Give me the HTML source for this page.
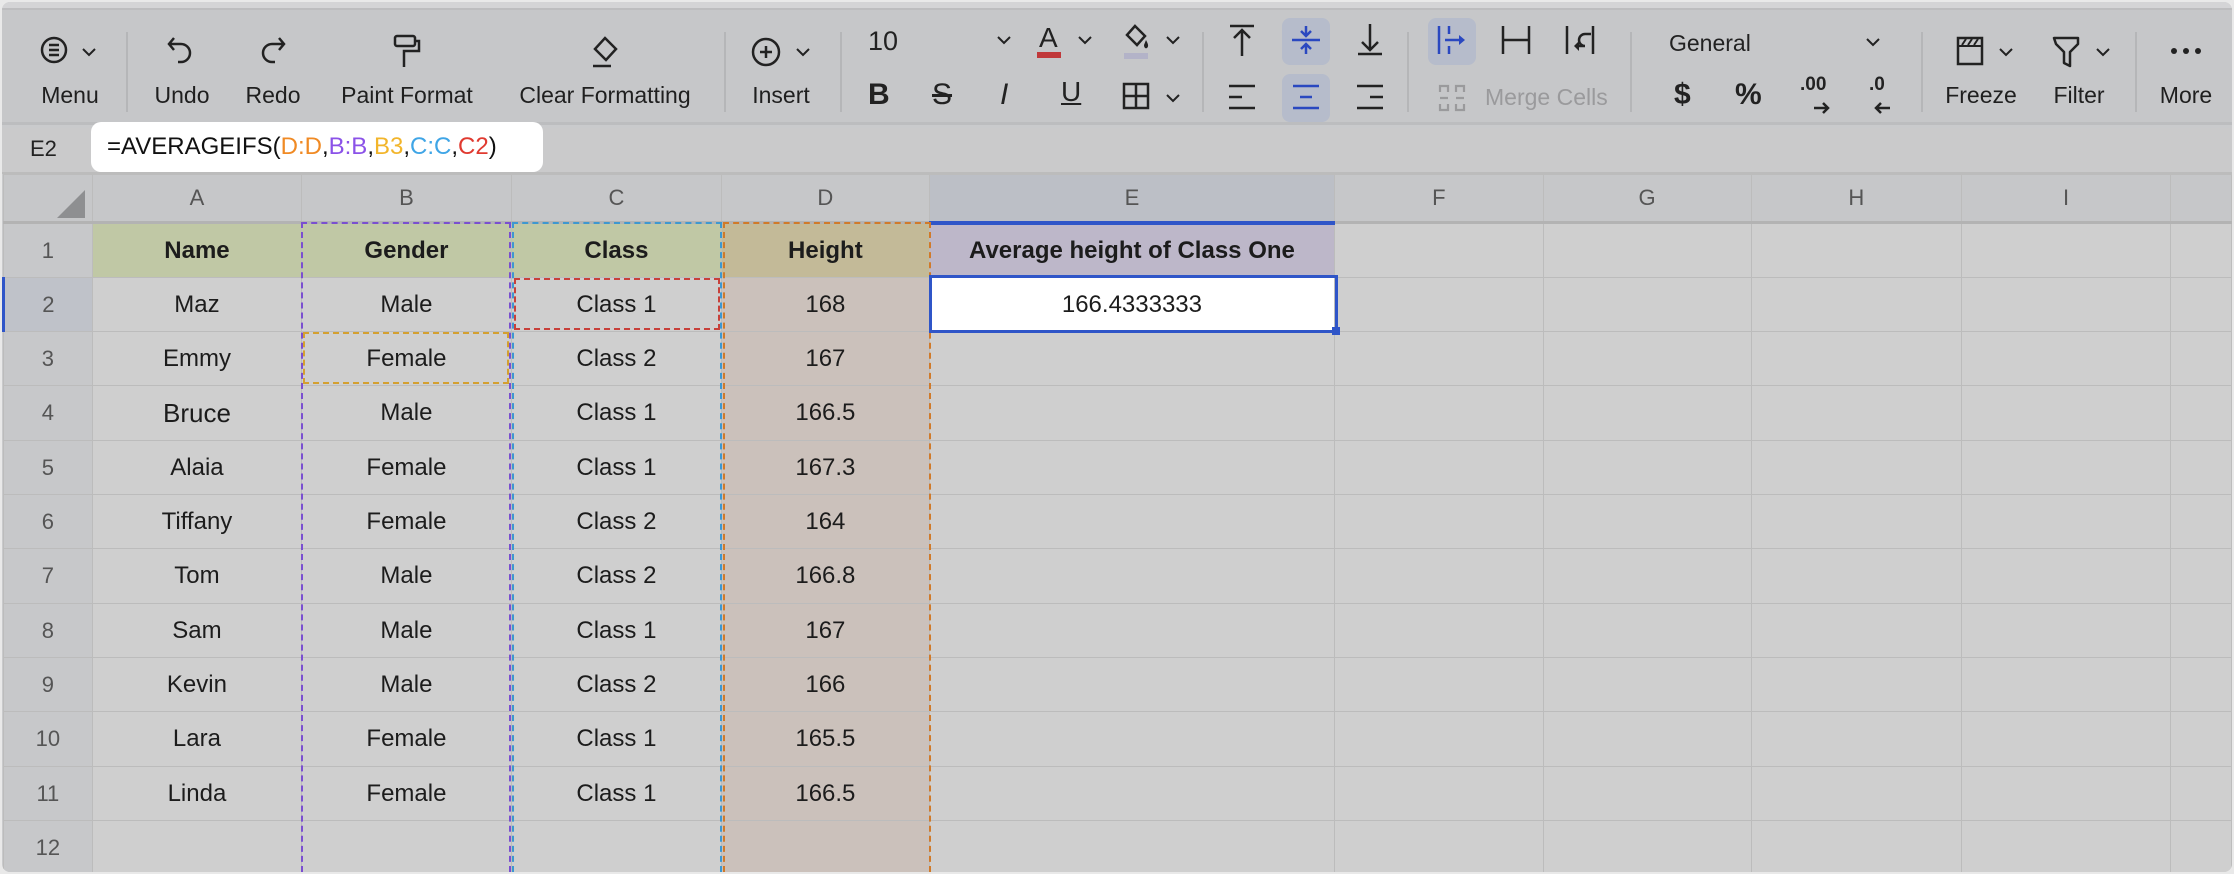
<!DOCTYPE html>
<html><head><meta charset="utf-8"><style>
*{box-sizing:border-box;margin:0;padding:0}
body{width:2234px;height:874px;background:#e9e9e9;font-family:"Liberation Sans",sans-serif;position:relative;overflow:hidden}
.frame{position:absolute;left:2px;top:2px;width:2230px;height:870px;border-radius:8px;background:#c9cacc;overflow:hidden}
.topstrip{position:absolute;left:0;top:0;width:100%;height:8px;background:#d4d4d6;border-bottom:2px solid #bdbdbf}
.tb{position:absolute;left:0;top:8px;width:100%;height:115px;background:#c6c7c9;border-bottom:3px solid #bcbdbf}
.a{position:absolute}
.lbl{position:absolute;font-size:23px;color:#1f1f1f;transform:translateX(-50%);white-space:nowrap;top:72px}
.sep{position:absolute;top:22px;width:2px;height:80px;background:#b5b6b8}
.hl{position:absolute;background:#b6bccb;border-radius:8px}
svg{position:absolute;overflow:visible}
.fb{position:absolute;left:0;top:126px;width:100%;height:46px;background:#cacacb;border-bottom:2px solid #bcbcbc}
.fbox{position:absolute;left:89px;top:-6px;width:452px;height:50px;background:#fff;border-radius:10px}
table{position:absolute;left:0;top:172px;border-collapse:collapse;table-layout:fixed}
td{border:1px solid #bcbcbc;text-align:center;font-size:24px;color:#1c1c1c;background:#cfcfcf;padding:0;overflow:hidden;white-space:nowrap}
tr.h td{background:#c6c7c9;color:#555;font-size:22px;height:48px;border-bottom:3px solid #b3b3b3}
td.rh{background:#c7c8ca;color:#555;font-size:22px}
.g{background:#c0c8a5!important;font-weight:bold}
.dh{background:#c3ba98!important;font-weight:bold}
.d{background:#cbc1bb!important}
.e1{background:#bdb7c9!important;font-weight:bold}
.dash{position:absolute}
</style></head><body>
<div class="frame">
<div class="topstrip"></div>
<div class="tb">
 <!-- Menu -->
 <svg style="left:38px;top:24px" width="32" height="32" viewBox="0 0 32 32"><circle cx="14" cy="16" r="12" fill="none" stroke="#222" stroke-width="2.5"/><path d="M9 11h10M9 16h10M9 21h10" stroke="#222" stroke-width="2.5"/></svg>
 <svg style="left:80px;top:38px" width="14" height="8"><path d="M1 1l6 6 6-6" stroke="#222" stroke-width="2" fill="none"/></svg>
 <div class="lbl" style="left:68px">Menu</div>
 <div class="sep" style="left:124px"></div>
 <svg style="left:166px;top:26px" width="28" height="32"><path d="M6 2L1 8l5 6M1 8h12a9 9 0 010 18H10" stroke="#222" stroke-width="2.5" fill="none"/></svg>
 <div class="lbl" style="left:180px">Undo</div>
 <svg style="left:257px;top:26px" width="28" height="32"><path d="M20 2l5 6-5 6M25 8H13a9 9 0 000 18h3" stroke="#222" stroke-width="2.5" fill="none"/></svg>
 <div class="lbl" style="left:271px">Redo</div>
 <svg style="left:390px;top:24px" width="30" height="36"><rect x="3" y="2" width="20" height="10" rx="2" fill="none" stroke="#222" stroke-width="2.5"/><path d="M23 7h4v10H12v16" stroke="#222" stroke-width="2.5" fill="none"/></svg>
 <div class="lbl" style="left:405px">Paint Format</div>
 <svg style="left:588px;top:26px" width="30" height="32"><path d="M15 2l11 11-10 11-11-11zM5 13l11 11M3 30h18" stroke="#222" stroke-width="2.5" fill="none"/></svg>
 <div class="lbl" style="left:603px">Clear Formatting</div>
 <div class="sep" style="left:722px"></div>
 <svg style="left:748px;top:26px" width="32" height="32"><circle cx="16" cy="16" r="13" fill="none" stroke="#222" stroke-width="2.5"/><path d="M16 10v12M10 16h12" stroke="#222" stroke-width="2.5"/></svg>
 <svg style="left:794px;top:38px" width="14" height="8"><path d="M1 1l6 6 6-6" stroke="#222" stroke-width="2" fill="none"/></svg>
 <div class="lbl" style="left:779px">Insert</div>
 <div class="sep" style="left:838px"></div>
 <div class="a" style="left:866px;top:16px;font-size:27px;color:#222">10</div>
 <svg style="left:995px;top:26px" width="14" height="8"><path d="M1 1l6 6 6-6" stroke="#222" stroke-width="2" fill="none"/></svg>
 <div class="a" style="left:1037px;top:12px;font-size:28px;color:#222">A</div>
 <div class="a" style="left:1035px;top:42px;width:24px;height:6px;background:#c0383a"></div>
 <svg style="left:1076px;top:26px" width="14" height="8"><path d="M1 1l6 6 6-6" stroke="#222" stroke-width="2" fill="none"/></svg>
 <svg style="left:1120px;top:14px" width="30" height="36"><path d="M13 2l10 10-8 9-10-10z" fill="none" stroke="#222" stroke-width="2.5"/><path d="M24 16c2 4 3 6 1 8-2 1-3-1-3-3z" fill="#222"/><rect x="2" y="29" width="24" height="6" fill="#b3b3c8"/></svg>
 <svg style="left:1164px;top:26px" width="14" height="8"><path d="M1 1l6 6 6-6" stroke="#222" stroke-width="2" fill="none"/></svg>
 <div class="a" style="left:866px;top:68px;font-size:30px;font-weight:bold;color:#222">B</div>
 <div class="a" style="left:930px;top:68px;font-size:30px;color:#222;text-decoration:line-through">S</div>
 <div class="a" style="left:998px;top:68px;font-size:30px;font-style:italic;color:#222">I</div>
 <div class="a" style="left:1059px;top:66px;font-size:28px;color:#222;text-decoration:underline">U</div>
 <svg style="left:1120px;top:72px" width="28" height="28"><rect x="2" y="2" width="24" height="24" fill="none" stroke="#222" stroke-width="2.5"/><path d="M14 2v24M2 14h24" stroke="#222" stroke-width="2.5"/></svg>
 <svg style="left:1164px;top:84px" width="14" height="8"><path d="M1 1l6 6 6-6" stroke="#222" stroke-width="2" fill="none"/></svg>
 <div class="sep" style="left:1200px"></div>
 <div class="hl" style="left:1280px;top:8px;width:48px;height:47px"></div>
 <div class="hl" style="left:1280px;top:64px;width:48px;height:48px"></div>
 <div class="hl" style="left:1426px;top:8px;width:48px;height:47px"></div>
 <svg style="left:1227px;top:14px" width="26" height="32"><path d="M1 2h24M13 32V6M5 14l8-8 8 8" stroke="#222" stroke-width="2.5" fill="none"/></svg>
 <svg style="left:1290px;top:14px" width="28" height="32"><path d="M0 16h28M14 2v10M9 7l5 5 5-5M14 30V20M9 25l5-5 5 5" stroke="#2a48c0" stroke-width="2.5" fill="none"/></svg>
 <svg style="left:1355px;top:14px" width="26" height="32"><path d="M1 30h24M13 0v26M5 18l8 8 8-8" stroke="#222" stroke-width="2.5" fill="none"/></svg>
 <svg style="left:1227px;top:74px" width="26" height="26"><path d="M0 2h26M0 13h13M0 24h26" stroke="#222" stroke-width="2.5"/></svg>
 <svg style="left:1291px;top:74px" width="26" height="26"><path d="M0 2h26M7 13h12M0 24h26" stroke="#2a48c0" stroke-width="2.5"/></svg>
 <svg style="left:1355px;top:74px" width="26" height="26"><path d="M0 2h26M13 13h13M0 24h26" stroke="#222" stroke-width="2.5"/></svg>
 <div class="sep" style="left:1405px"></div>
 <svg style="left:1435px;top:14px" width="30" height="32"><path d="M2 2v28M12 2v8M12 22v8M8 16h16" stroke="#2a48c0" stroke-width="2.5" fill="none"/><path d="M22 11l6 5-6 5z" fill="#2a48c0"/></svg>
 <svg style="left:1499px;top:16px" width="30" height="28"><path d="M2 0v28M28 0v28M2 14h26" stroke="#222" stroke-width="2.5"/></svg>
 <svg style="left:1563px;top:16px" width="30" height="28"><path d="M2 0v28M28 0v28M26 8h-6a6 6 0 000 12h-8" stroke="#222" stroke-width="2.5" fill="none"/><path d="M14 15l-5 5 5 5z" fill="#222"/></svg>
 <svg style="left:1436px;top:72px" width="30" height="32"><path d="M2 10V4h8v6M18 10V4h8v6M2 22v6h8v-6M18 22v6h8v-6M2 16h8M18 16h8" stroke="#9a9a9c" stroke-width="2.2" fill="none"/></svg>
 <div class="a" style="left:1483px;top:74px;font-size:23px;color:#9a9a9c">Merge Cells</div>
 <div class="sep" style="left:1628px"></div>
 <div class="a" style="left:1667px;top:20px;font-size:23px;color:#222">General</div>
 <svg style="left:1864px;top:28px" width="14" height="8"><path d="M1 1l6 6 6-6" stroke="#222" stroke-width="2" fill="none"/></svg>
 <div class="a" style="left:1672px;top:68px;font-size:30px;font-weight:bold;color:#222">$</div>
 <div class="a" style="left:1733px;top:68px;font-size:30px;font-weight:bold;color:#222">%</div>
 <div class="a" style="left:1798px;top:64px;font-size:19px;font-weight:bold;color:#222">.00</div>
 <svg style="left:1812px;top:91px" width="18" height="14"><path d="M0 7h14M9 2l5 5-5 5" stroke="#222" stroke-width="2.5" fill="none"/></svg>
 <div class="a" style="left:1867px;top:64px;font-size:19px;font-weight:bold;color:#222">.0</div>
 <svg style="left:1870px;top:91px" width="18" height="14"><path d="M18 7H4M9 2L4 7l5 5" stroke="#222" stroke-width="2.5" fill="none"/></svg>
 <div class="sep" style="left:1919px"></div>
 <svg style="left:1954px;top:26px" width="28" height="30"><rect x="2" y="2" width="24" height="26" fill="none" stroke="#222" stroke-width="2.5"/><path d="M2 10h24M6 9l4-6M12 9l4-6M18 9l4-6" stroke="#222" stroke-width="2"/></svg>
 <svg style="left:1997px;top:38px" width="14" height="8"><path d="M1 1l6 6 6-6" stroke="#222" stroke-width="2" fill="none"/></svg>
 <div class="lbl" style="left:1979px">Freeze</div>
 <svg style="left:2050px;top:26px" width="28" height="32"><path d="M2 2h24v6l-8 8v14l-6-3V16L4 8z" fill="none" stroke="#222" stroke-width="2.5" stroke-linejoin="round"/></svg>
 <svg style="left:2094px;top:38px" width="14" height="8"><path d="M1 1l6 6 6-6" stroke="#222" stroke-width="2" fill="none"/></svg>
 <div class="lbl" style="left:2077px">Filter</div>
 <div class="sep" style="left:2133px"></div>
 <svg style="left:2168px;top:37px" width="32" height="8"><circle cx="4" cy="4" r="3" fill="#222"/><circle cx="16" cy="4" r="3" fill="#222"/><circle cx="28" cy="4" r="3" fill="#222"/></svg>
 <div class="lbl" style="left:2184px">More</div>
</div>
<div class="fb">
 <div class="a" style="left:28px;top:8px;font-size:22px;color:#222">E2</div>
 <div class="fbox"><div class="a" style="left:16px;top:11px;font-size:24px;color:#111;white-space:nowrap">=AVERAGEIFS(<span style="color:#f08a24">D:D</span>,<span style="color:#8b52e8">B:B</span>,<span style="color:#f2b52b">B3</span>,<span style="color:#3fa5e6">C:C</span>,<span style="color:#e03a30">C2</span>)</div></div>
</div>
<table>
<colgroup><col style="width:89px"><col style="width:210px"><col style="width:210px"><col style="width:211px"><col style="width:208px"><col style="width:406px"><col style="width:209px"><col style="width:209px"><col style="width:211px"><col style="width:210px"><col style="width:61px"></colgroup>
<tr class="h"><td></td><td>A</td><td>B</td><td>C</td><td>D</td><td style="background:#bcbfc6;border-bottom:4px solid #2f55c8">E</td><td>F</td><td>G</td><td>H</td><td>I</td><td></td></tr>
<tr style="height:55px"><td class="rh">1</td><td class="g">Name</td><td class="g">Gender</td><td class="g">Class</td><td class="dh">Height</td><td class="e1">Average height of Class One</td><td></td><td></td><td></td><td></td><td></td></tr>
<tr style="height:54px"><td class="rh" style="background:#bfc2c9;border-left:3px solid #2f55c8">2</td><td>Maz</td><td>Male</td><td>Class 1</td><td class="d">168</td><td style="background:#fff">166.4333333</td><td></td><td></td><td></td><td></td><td></td></tr>
<tr style="height:54px"><td class="rh">3</td><td>Emmy</td><td>Female</td><td>Class 2</td><td class="d">167</td><td></td><td></td><td></td><td></td><td></td><td></td></tr>
<tr style="height:55px"><td class="rh">4</td><td style="font-size:26px">Bruce</td><td>Male</td><td>Class 1</td><td class="d">166.5</td><td></td><td></td><td></td><td></td><td></td><td></td></tr>
<tr style="height:54px"><td class="rh">5</td><td>Alaia</td><td>Female</td><td>Class 1</td><td class="d">167.3</td><td></td><td></td><td></td><td></td><td></td><td></td></tr>
<tr style="height:54px"><td class="rh">6</td><td>Tiffany</td><td>Female</td><td>Class 2</td><td class="d">164</td><td></td><td></td><td></td><td></td><td></td><td></td></tr>
<tr style="height:55px"><td class="rh">7</td><td>Tom</td><td>Male</td><td>Class 2</td><td class="d">166.8</td><td></td><td></td><td></td><td></td><td></td><td></td></tr>
<tr style="height:54px"><td class="rh">8</td><td>Sam</td><td>Male</td><td>Class 1</td><td class="d">167</td><td></td><td></td><td></td><td></td><td></td><td></td></tr>
<tr style="height:54px"><td class="rh">9</td><td>Kevin</td><td>Male</td><td>Class 2</td><td class="d">166</td><td></td><td></td><td></td><td></td><td></td><td></td></tr>
<tr style="height:55px"><td class="rh">10</td><td>Lara</td><td>Female</td><td>Class 1</td><td class="d">165.5</td><td></td><td></td><td></td><td></td><td></td><td></td></tr>
<tr style="height:54px"><td class="rh">11</td><td>Linda</td><td>Female</td><td>Class 1</td><td class="d">166.5</td><td></td><td></td><td></td><td></td><td></td><td></td></tr>
<tr style="height:54px"><td class="rh">12</td><td></td><td></td><td></td><td class="d"></td><td></td><td></td><td></td><td></td><td></td><td></td></tr>
</table>
<svg style="left:55px;top:188px" width="30" height="28"><path d="M28 0v28H0z" fill="#8e8f91"/></svg>
<div class="dash" style="left:299px;top:220px;width:210px;height:660px;border:2px dashed #7a4fd0;border-bottom:none"></div>
<div class="dash" style="left:510px;top:220px;width:210px;height:660px;border:2px dashed #3e98d0;border-bottom:none"></div>
<div class="dash" style="left:721px;top:220px;width:208px;height:660px;border:2px dashed #d07a2a;border-bottom:none"></div>
<div class="dash" style="left:512px;top:276px;width:206px;height:52px;border:2px dashed #c8403a"></div>
<div class="dash" style="left:301px;top:330px;width:206px;height:52px;border:2px dashed #d4a030"></div>
<div class="dash" style="left:927px;top:273px;width:409px;height:58px;border:3px solid #2f55c8"></div>
<div class="dash" style="left:1330px;top:325px;width:8px;height:8px;background:#2f55c8"></div>
</div>
</body></html>
